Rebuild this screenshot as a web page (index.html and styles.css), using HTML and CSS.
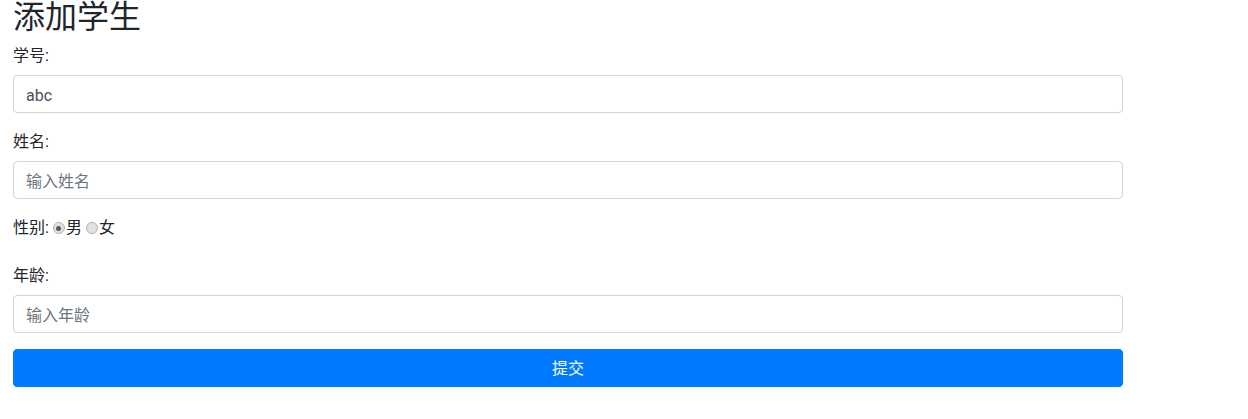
FILE: index.html
```html
<!DOCTYPE html>
<html lang="zh">
<head>
<meta charset="utf-8">
<title>添加学生</title>
<link rel="stylesheet" href="styles.css">
</head>
<body>
<div class="page">
  <h2 class="title">添加学生</h2>
  <form class="form">
    <div class="form-group">
      <label class="label">学号:</label>
      <input class="form-control" type="text" value="abc">
    </div>
    <div class="form-group">
      <label class="label">姓名:</label>
      <input class="form-control" type="text" placeholder="输入姓名">
    </div>
    <div class="form-group">
      <label class="label">性别:</label><input class="radio" type="radio" name="sex" checked>男<input class="radio" type="radio" name="sex">女
    </div>
    <div class="form-group">
      <label class="label">年龄:</label>
      <input class="form-control" type="text" placeholder="输入年龄">
    </div>
    <button class="btn" type="button">提交</button>
  </form>
</div>
</body>
</html>
```

FILE: styles.css
```css
* { box-sizing: border-box; }
html, body { margin: 0; padding: 0; }
body {
  font-family: Roboto, "Noto Sans CJK SC", sans-serif;
  font-size: 16px;
  line-height: 1.5;
  color: #212529;
  background: #fff;
}
.page {
  width: 1110px;
  margin-left: 13px;
}
.title {
  margin: 0 0 8px 0;
  font-size: 32px;
  font-weight: 400;
  line-height: 35px;
}
.form { margin: 0; }
.form-group { margin-bottom: 16px; }
.label {
  display: inline-block;
  margin-bottom: 7px;
  padding-top: 1px;
}
.form-control {
  display: block;
  width: 100%;
  height: 38px;
  padding: 7px 12px 5px;
  font-family: inherit;
  font-size: 16px;
  line-height: 1.5;
  color: #495057;
  background: #fff;
  border: 1px solid #ced4da;
  border-radius: 4px;
  outline: none;
}
.form-control::placeholder { color: #6c757d; opacity: 1; }
.radio {
  -webkit-appearance: none;
  appearance: none;
  display: inline-block;
  vertical-align: -1px;
  margin: 0 1px 0 4px;
  width: 12px;
  height: 12px;
  border: 1px solid #b4b4b4;
  border-radius: 50%;
  background: #e2e2e2;
  position: relative;
}
.radio:checked::after {
  content: "";
  position: absolute;
  left: 2.5px;
  top: 2.5px;
  width: 5px;
  height: 5px;
  border-radius: 50%;
  background: #5a5a5a;
}
.btn {
  display: block;
  width: 100%;
  height: 38px;
  padding: 7px 12px 5px;
  font-family: inherit;
  font-size: 16px;
  line-height: 1.5;
  color: #fff;
  background: #007bff;
  border: 1px solid #007bff;
  border-radius: 4px;
  cursor: pointer;
}
```
